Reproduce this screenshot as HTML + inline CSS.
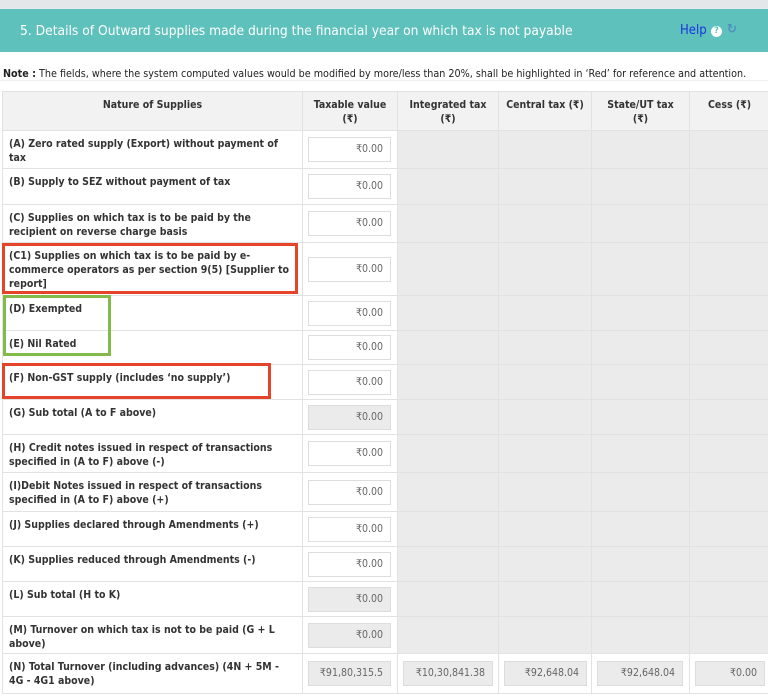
<!DOCTYPE html>
<html><head><meta charset="utf-8"><style>
*{margin:0;padding:0;box-sizing:border-box}
body{width:768px;height:697px;background:#fff;position:relative;overflow:hidden;font-family:"DejaVu Sans Condensed","DejaVu Sans",sans-serif;color:#333}
.top{position:absolute;left:0;top:0;width:768px;height:9px;background:#e4e7ea}
.hdr{position:absolute;left:0;top:9px;width:768px;height:43px;background:#5fc1bb}
.hdr .t{position:absolute;left:20px;top:14px;color:#fff;font-family:"DejaVu Sans Condensed",sans-serif;font-size:13.7px}
.hdr .h{position:absolute;left:680px;top:14px;color:#1a33e0;font-size:13px}
.q{position:absolute;left:711px;top:17px;width:11px;height:11px;border-radius:50%;background:#fff;color:#5fc1bb;font-size:9px;font-weight:bold;text-align:center;line-height:11px}
.r{position:absolute;left:727px;top:13px;color:#4f8fc0;font-size:13px;font-weight:bold}
.note{position:absolute;left:3px;top:67px;font-size:10.7px;color:#222}
.nl{position:absolute;left:0;top:80px;width:768px;height:1px;background:#eee}
table{position:absolute;left:2px;top:91px;border-collapse:collapse;table-layout:fixed;width:770px}
td,th{border:1px solid #e2e2e2;vertical-align:top;font-size:10.5px;font-weight:bold;white-space:nowrap}
th{background:#f2f2f2;text-align:center;padding-top:6px;line-height:14px;height:39px}
td.l{padding:6px 0 0 6px;line-height:14px}
td.g{background:#ebebeb}
td.v{padding-left:5px;vertical-align:middle}
.in{width:83px;height:25px;border:1px solid #ddd;background:#fff;text-align:right;padding-right:7px;font-weight:normal;font-size:10.5px;color:#666;line-height:23px}
.in.d{background:#ebebeb}
.box{position:absolute;border:3px solid #e5432a}
.gb{position:absolute;border:3px solid #82bb4a}
</style></head><body>
<div class="top"></div>
<div class="hdr"><div class="t">5. Details of Outward supplies made during the financial year on which tax is not payable</div><div class="h">Help</div><div class="q">?</div><div class="r">↻</div></div>
<div class="note"><b>Note :</b> The fields, where the system computed values would be modified by more/less than 20%, shall be highlighted in ‘Red’ for reference and attention.</div>
<div class="nl"></div>
<table>
<colgroup><col style="width:300px"><col style="width:95px"><col style="width:101px"><col style="width:93px"><col style="width:98px"><col style="width:83px"></colgroup>
<tr><th>Nature of Supplies</th><th>Taxable value<br>(₹)</th><th>Integrated tax<br>(₹)</th><th>Central tax (₹)</th><th>State/UT tax<br>(₹)</th><th style="text-align:left;padding-left:18px">Cess (₹)</th></tr>
<tr style="height:38px"><td class="l">(A) Zero rated supply (Export) without payment of<br>tax</td><td class="v"><div class="in">₹0.00</div></td><td class="g"></td><td class="g"></td><td class="g"></td><td class="g"></td></tr>
<tr style="height:36px"><td class="l">(B) Supply to SEZ without payment of tax</td><td class="v"><div class="in">₹0.00</div></td><td class="g"></td><td class="g"></td><td class="g"></td><td class="g"></td></tr>
<tr style="height:38px"><td class="l">(C) Supplies on which tax is to be paid by the<br>recipient on reverse charge basis</td><td class="v"><div class="in">₹0.00</div></td><td class="g"></td><td class="g"></td><td class="g"></td><td class="g"></td></tr>
<tr style="height:53px"><td class="l">(C1) Supplies on which tax is to be paid by e-<br>commerce operators as per section 9(5) [Supplier to<br>report]</td><td class="v"><div class="in">₹0.00</div></td><td class="g"></td><td class="g"></td><td class="g"></td><td class="g"></td></tr>
<tr style="height:35px"><td class="l">(D) Exempted</td><td class="v"><div class="in">₹0.00</div></td><td class="g"></td><td class="g"></td><td class="g"></td><td class="g"></td></tr>
<tr style="height:34px"><td class="l">(E) Nil Rated</td><td class="v"><div class="in">₹0.00</div></td><td class="g"></td><td class="g"></td><td class="g"></td><td class="g"></td></tr>
<tr style="height:35px"><td class="l">(F) Non-GST supply (includes ‘no supply’)</td><td class="v"><div class="in">₹0.00</div></td><td class="g"></td><td class="g"></td><td class="g"></td><td class="g"></td></tr>
<tr style="height:35px"><td class="l">(G) Sub total (A to F above)</td><td class="v"><div class="in d">₹0.00</div></td><td class="g"></td><td class="g"></td><td class="g"></td><td class="g"></td></tr>
<tr style="height:38px"><td class="l">(H) Credit notes issued in respect of transactions<br>specified in (A to F) above (-)</td><td class="v"><div class="in">₹0.00</div></td><td class="g"></td><td class="g"></td><td class="g"></td><td class="g"></td></tr>
<tr style="height:39px"><td class="l">(I)Debit Notes issued in respect of transactions<br>specified in (A to F) above (+)</td><td class="v"><div class="in">₹0.00</div></td><td class="g"></td><td class="g"></td><td class="g"></td><td class="g"></td></tr>
<tr style="height:35px"><td class="l">(J) Supplies declared through Amendments (+)</td><td class="v"><div class="in">₹0.00</div></td><td class="g"></td><td class="g"></td><td class="g"></td><td class="g"></td></tr>
<tr style="height:35px"><td class="l">(K) Supplies reduced through Amendments (-)</td><td class="v"><div class="in">₹0.00</div></td><td class="g"></td><td class="g"></td><td class="g"></td><td class="g"></td></tr>
<tr style="height:35px"><td class="l">(L) Sub total (H to K)</td><td class="v"><div class="in d">₹0.00</div></td><td class="g"></td><td class="g"></td><td class="g"></td><td class="g"></td></tr>
<tr style="height:37px"><td class="l">(M) Turnover on which tax is not to be paid (G + L<br>above)</td><td class="v"><div class="in d">₹0.00</div></td><td class="g"></td><td class="g"></td><td class="g"></td><td class="g"></td></tr>
<tr style="height:40px"><td class="l">(N) Total Turnover (including advances) (4N + 5M -<br>4G - 4G1 above)</td><td class="v"><div class="in d">₹91,80,315.5</div></td><td class="v"><div class="in d" style="width:90px">₹10,30,841.38</div></td><td class="v"><div class="in d">₹92,648.04</div></td><td class="v"><div class="in d" style="width:86px">₹92,648.04</div></td><td class="v"><div class="in d" style="width:70px">₹0.00</div></td></tr>
</table>
<div class="box" style="left:2px;top:243px;width:296px;height:51px"></div>
<div class="gb" style="left:3px;top:295px;width:108px;height:61px"></div>
<div class="box" style="left:2px;top:363px;width:269px;height:36px"></div>
</body></html>
